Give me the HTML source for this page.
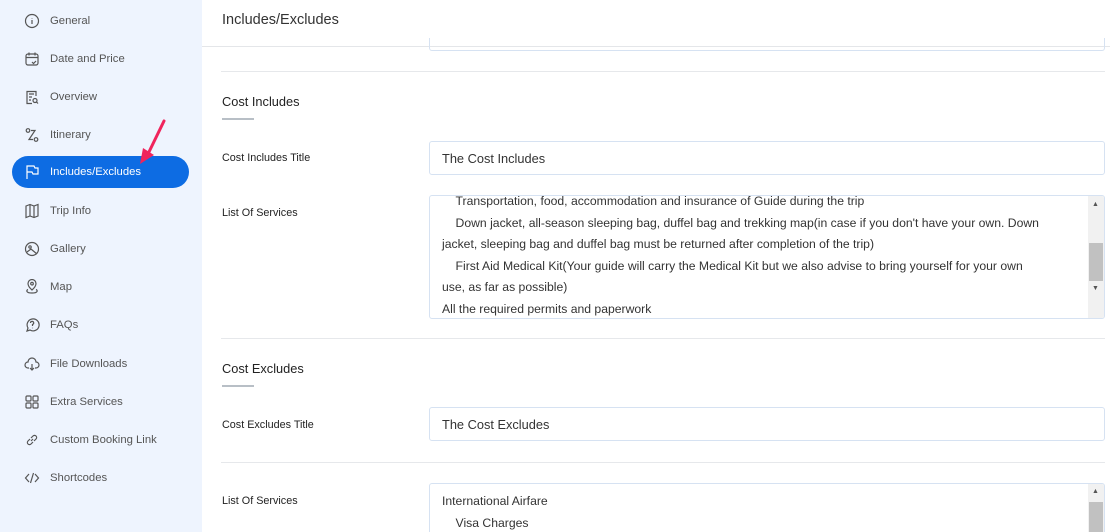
<!DOCTYPE html>
<html><head><style>
*{box-sizing:border-box;margin:0;padding:0}
html,body{width:1110px;height:532px;overflow:hidden}
body{font-family:"Liberation Sans",sans-serif;background:#fff;position:relative;color:#333}
.side{position:absolute;left:0;top:0;width:202px;height:532px;background:#eef4fe}
.item{position:absolute;left:12px;width:177px;height:32px;display:flex;align-items:center;padding-left:12px;font-size:11.3px;color:#555}
.item svg{width:16px;height:16px;margin-right:10px;flex:none}
.item.act{background:#0d6ce3;color:#fff;border-radius:16px}
.main{position:absolute;left:202px;top:0;right:0;height:532px;overflow:hidden}
.a{position:absolute}
.line{position:absolute;left:19px;width:884px;height:1px;background:#e6e8eb}
.lab{position:absolute;left:20px;font-size:10.8px;color:#222}
.h{position:absolute;left:20px;font-size:12.8px;color:#222}
.ul{position:absolute;left:20px;width:32px;height:2px;background:#b8bfc6}
.inp{position:absolute;left:227px;width:676px;border:1px solid #d6e2f2;border-radius:3px;background:#fff;font-size:12.8px;color:#333;padding-left:12px;display:flex;align-items:center}
.ta{position:absolute;left:227px;width:676px;border:1px solid #d6e2f2;border-radius:3px;overflow:hidden;background:#fff;font-size:12.2px;color:#333}
.ta .t{position:absolute;left:12px;right:22px;line-height:21.6px}
.sb{position:absolute;right:0;top:0;bottom:0;width:16px;background:#f1f1f1}
</style></head><body>
<div class="side">
<div class="item" style="top:5px"><svg viewBox="0 0 16 16" fill="none" stroke="#555" stroke-width="1.2"><circle cx="8" cy="8" r="6.5"/><path d="M8 7v4M8 5v.5"/></svg>General</div>
<div class="item" style="top:43px"><svg viewBox="0 0 16 16" fill="none" stroke="#555" stroke-width="1.2"><rect x="2" y="3" width="12" height="11" rx="2"/><path d="M2 6.5h12M5 1.5v3M11 1.5v3M8 11l1.5 1.5L12 10"/></svg>Date and Price</div>
<div class="item" style="top:81px"><svg viewBox="0 0 16 16" fill="none" stroke="#555" stroke-width="1.2"><path d="M12 7V2.5H3v12h5M5 5h5M5 8h3M5 11h2"/><circle cx="11" cy="11.5" r="2"/><path d="M12.5 13l1.5 1.5"/></svg>Overview</div>
<div class="item" style="top:119px"><svg viewBox="0 0 16 16" fill="none" stroke="#555" stroke-width="1.2"><circle cx="4" cy="3.5" r="1.8"/><circle cx="12" cy="12.5" r="1.8"/><path d="M7 3.5h4l-6 9h4"/></svg>Itinerary</div>
<div class="item act" style="top:156px"><svg viewBox="0 0 16 16" fill="none" stroke="#fff" stroke-width="1.2"><path d="M3 15V2h7l1 2h3v6h-5l-1-2H3"/></svg>Includes/Excludes</div>
<div class="item" style="top:195px"><svg viewBox="0 0 16 16" fill="none" stroke="#555" stroke-width="1.2"><path d="M2 3l4-1.5 4 1.5 4-1.5v11.5l-4 1.5-4-1.5-4 1.5zM6 1.5v11.5M10 3v11.5"/></svg>Trip Info</div>
<div class="item" style="top:233px"><svg viewBox="0 0 16 16" fill="none" stroke="#555" stroke-width="1.2"><circle cx="8" cy="8" r="6.5"/><circle cx="6" cy="6" r="1.2"/><path d="M3 11l4-3 6 5"/></svg>Gallery</div>
<div class="item" style="top:271px"><svg viewBox="0 0 16 16" fill="none" stroke="#555" stroke-width="1.2"><path d="M8 11s4-3.5 4-6.5a4 4 0 0 0-8 0C4 7.5 8 11 8 11z"/><circle cx="8" cy="4.7" r="1.3"/><path d="M4 10.5c-2 .7-2 3.5 4 3.5s6-2.8 4-3.5"/></svg>Map</div>
<div class="item" style="top:309px"><svg viewBox="0 0 16 16" fill="none" stroke="#555" stroke-width="1.2"><path d="M3 14l1-3a6 6 0 1 1 2 2z"/><path d="M6.5 6a1.6 1.6 0 1 1 2 1.5V9M8.5 10.8v.4"/></svg>FAQs</div>
<div class="item" style="top:348px"><svg viewBox="0 0 16 16" fill="none" stroke="#555" stroke-width="1.2"><path d="M5 12H4a3 3 0 0 1 0-6 4 4 0 0 1 8 0 3 3 0 0 1 0 6h-1M8 8v6M6 12l2 2 2-2"/></svg>File Downloads</div>
<div class="item" style="top:386px"><svg viewBox="0 0 16 16" fill="none" stroke="#555" stroke-width="1.2"><rect x="2" y="2" width="5" height="5" rx="1"/><rect x="9" y="2" width="5" height="5" rx="1"/><rect x="2" y="9" width="5" height="5" rx="1"/><rect x="9" y="9" width="5" height="5" rx="1"/></svg>Extra Services</div>
<div class="item" style="top:424px"><svg viewBox="0 0 16 16" fill="none" stroke="#555" stroke-width="1.2"><path d="M7 9l2-2M6 7L4 9a2 2 0 0 0 3 3l2-2M10 9l2-2a2 2 0 0 0-3-3L7 6"/></svg>Custom Booking Link</div>
<div class="item" style="top:462px"><svg viewBox="0 0 16 16" fill="none" stroke="#555" stroke-width="1.2"><path d="M5 4L1.5 8 5 12M11 4l3.5 4L11 12M9.5 3l-3 10"/></svg>Shortcodes</div>
<svg class="a" style="left:136px;top:118px" width="34" height="50" viewBox="0 0 34 50"><path d="M28 3L12 36" stroke="#f0245c" stroke-width="3" stroke-linecap="round"/><path d="M4 46l3-16 11 7z" fill="#f0245c"/></svg>
</div>
<div class="main">
<div class="a" style="left:20px;top:12px;font-size:14.5px;color:#333">Includes/Excludes</div>
<div class="a" style="left:0;top:46px;width:908px;height:1px;background:#e4e6e9"></div>
<div class="a" style="left:227px;top:38px;width:676px;height:13px;border:1px solid #d6e2f2;border-top:none;border-radius:0 0 3px 3px"></div>
<div class="line" style="top:71px"></div>
<div class="h" style="top:94px">Cost Includes</div>
<div class="ul" style="top:118px"></div>
<div class="lab" style="top:152px">Cost Includes Title</div>
<div class="inp" style="top:141px;height:34px">The Cost Includes</div>
<div class="lab" style="top:207px">List Of Services</div>
<div class="ta" style="top:195px;height:124px">
<div class="t" style="top:-5px">&nbsp;&nbsp;&nbsp;&nbsp;Transportation, food, accommodation and insurance of Guide during the trip<br>&nbsp;&nbsp;&nbsp;&nbsp;Down jacket, all-season sleeping bag, duffel bag and trekking map(in case if you don't have your own. Down<br>jacket, sleeping bag and duffel bag must be returned after completion of the trip)<br>&nbsp;&nbsp;&nbsp;&nbsp;First Aid Medical Kit(Your guide will carry the Medical Kit but we also advise to bring yourself for your own<br>use, as far as possible)<br>All the required permits and paperwork</div>
<div class="sb"><div class="a" style="left:4px;top:5px;font-size:7px;color:#555">▲</div><div class="a" style="left:1px;right:1px;top:47px;height:38px;background:#c1c1c1"></div><div class="a" style="left:4px;top:89px;font-size:7px;color:#555">▼</div></div>
</div>
<div class="line" style="top:338px"></div>
<div class="h" style="top:361px">Cost Excludes</div>
<div class="ul" style="top:385px"></div>
<div class="lab" style="top:419px">Cost Excludes Title</div>
<div class="inp" style="top:407px;height:34px">The Cost Excludes</div>
<div class="line" style="top:462px"></div>
<div class="lab" style="top:495px">List Of Services</div>
<div class="ta" style="top:483px;height:60px">
<div class="t" style="top:7px">International Airfare<br>&nbsp;&nbsp;&nbsp;&nbsp;Visa Charges</div>
<div class="sb"><div class="a" style="left:4px;top:4px;font-size:7px;color:#555">▲</div><div class="a" style="left:1px;right:1px;top:18px;height:50px;background:#c1c1c1"></div></div>
</div>
</div>
</body></html>
